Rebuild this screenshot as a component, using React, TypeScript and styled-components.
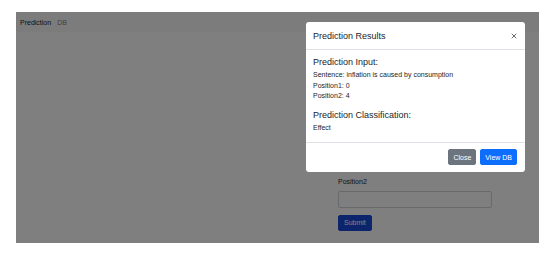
import React from 'react';
import styled, { createGlobalStyle } from 'styled-components';

const GlobalStyle = createGlobalStyle`
  html, body {
    margin: 0;
    background: #ffffff;
    font-family: "Liberation Sans", Arial, sans-serif;
    color: #212529;
  }
`;

const Frame = styled.div`
  position: relative;
  margin: 12px 0 0 16px;
  width: 523px;
  height: 231px;
  overflow: hidden;
  background: #ffffff;
`;

const Navbar = styled.nav`
  display: flex;
  align-items: center;
  gap: 6px;
  height: 20px;
  padding: 0 4px;
  background: #f8f9fa;
  font-size: 7px;
`;

const Brand = styled.span`
  color: #212529;
`;

const NavLink = styled.span`
  color: rgba(0, 0, 0, 0.55);
`;

const FormColumn = styled.form`
  display: flex;
  flex-direction: column;
  width: 154px;
  margin: 145px 0 0 322px;
`;

const Group = styled.div`
  display: flex;
  flex-direction: column;
  gap: 3px;
  margin-bottom: 7px;
`;

const Label = styled.label`
  font-size: 7px;
  line-height: 10.5px;
`;

const Input = styled.div`
  box-sizing: border-box;
  height: 17px;
  border: 1px solid #ced4da;
  border-radius: 2px;
  background: #fff;
`;

const Button = styled.button<{ $variant: 'primary' | 'secondary' }>`
  box-sizing: border-box;
  height: 16px;
  padding: 0 4px;
  border: 1px solid ${({ $variant }) => ($variant === 'primary' ? '#0d6efd' : '#6c757d')};
  border-radius: 2px;
  background: ${({ $variant }) => ($variant === 'primary' ? '#0d6efd' : '#6c757d')};
  color: #ffffff;
  font-family: inherit;
  font-size: 7px;
  cursor: pointer;
`;

const SubmitButton = styled(Button)`
  align-self: flex-start;
  padding: 0 5px;
  background: #1848d8;
  border-color: #1848d8;
`;

const Backdrop = styled.div`
  position: absolute;
  inset: 0;
  background: rgba(0, 0, 0, 0.5);
`;

const Modal = styled.div`
  position: absolute;
  left: 290px;
  top: 10px;
  width: 219px;
  background: #ffffff;
  border-radius: 3px;
  display: flex;
  flex-direction: column;
`;

const ModalHeader = styled.div`
  display: flex;
  align-items: center;
  justify-content: space-between;
  height: 28px;
  box-sizing: border-box;
  padding: 0 7px;
  border-bottom: 1px solid #dee2e6;
`;

const ModalTitle = styled.h5`
  margin: 0;
  font-size: 9px;
  font-weight: 400;
`;

const CloseX = styled.button`
  display: flex;
  align-items: center;
  justify-content: center;
  width: 8px;
  height: 8px;
  padding: 0;
  border: 0;
  background: transparent;
  opacity: 0.6;
  cursor: pointer;
`;

const ModalBody = styled.div`
  padding: 7px 7px 9px;
`;

const SectionTitle = styled.h5`
  margin: 0 0 2px;
  font-size: 9px;
  font-weight: 400;
  line-height: 11px;
`;

const TextBlock = styled.div<{ $last?: boolean }>`
  margin-bottom: ${({ $last }) => ($last ? '0' : '8px')};
  font-size: 7px;
  line-height: 10.5px;
`;

const ModalFooter = styled.div`
  display: flex;
  justify-content: flex-end;
  gap: 4px;
  padding: 6px 8px 7px;
  border-top: 1px solid #dee2e6;
`;

export default function App() {
  return (
    <>
      <GlobalStyle />
      <Frame>
        <Navbar>
          <Brand>Prediction</Brand>
          <NavLink>DB</NavLink>
        </Navbar>
        <FormColumn>
          <Group>
            <Label>Position2</Label>
            <Input />
          </Group>
          <SubmitButton $variant="primary" type="button">Submit</SubmitButton>
        </FormColumn>
        <Backdrop />
        <Modal>
          <ModalHeader>
            <ModalTitle>Prediction Results</ModalTitle>
            <CloseX aria-label="Close">
              <svg width="6" height="6" viewBox="0 0 16 16">
                <path d="M2 2 L14 14 M14 2 L2 14" stroke="#000" strokeWidth="2.6" />
              </svg>
            </CloseX>
          </ModalHeader>
          <ModalBody>
            <SectionTitle>Prediction Input:</SectionTitle>
            <TextBlock>
              Sentence: inflation is caused by consumption
              <br />
              Position1: 0
              <br />
              Position2: 4
            </TextBlock>
            <SectionTitle>Prediction Classification:</SectionTitle>
            <TextBlock $last>Effect</TextBlock>
          </ModalBody>
          <ModalFooter>
            <Button $variant="secondary" type="button">Close</Button>
            <Button $variant="primary" type="button">View DB</Button>
          </ModalFooter>
        </Modal>
      </Frame>
    </>
  );
}
